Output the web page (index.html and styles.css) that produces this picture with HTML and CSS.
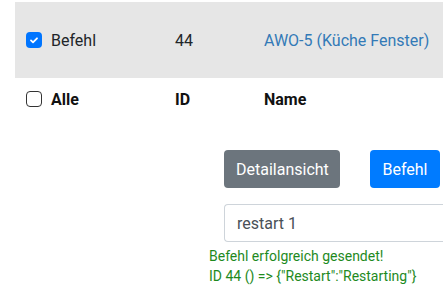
FILE: index.html
```html
<!DOCTYPE html>
<html lang="de">
<head>
  <meta charset="UTF-8" />
  <meta name="viewport" content="width=device-width, initial-scale=1.0" />
  <title>Befehle</title>
  <link rel="stylesheet" href="styles.css">
</head>
<body>
  <div class="row selected">
    <div class="cell first">
      <span class="check checked">
        <svg viewBox="0 0 16 16" width="16" height="16"><path d="M5 8.4l2 1.9 4-4" fill="none" stroke="#fff" stroke-width="1.8" stroke-linecap="round" stroke-linejoin="round"/></svg>
      </span>
      <span>Befehl</span>
    </div>
    <div class="cell">44</div>
    <div class="cell"><a class="name" href="#">AWO-5 (Küche Fenster)</a></div>
  </div>

  <div class="row head">
    <div class="cell first">
      <span class="check"></span>
      <span>Alle</span>
    </div>
    <div class="cell">ID</div>
    <div class="cell">Name</div>
  </div>

  <div class="actions">
    <div class="buttons">
      <button class="btn grey">Detailansicht</button>
      <button class="btn blue">Befehl</button>
    </div>
    <input class="cmd" type="text" value="restart 1" />
  </div>

  <div class="result">
    Befehl erfolgreich gesendet!<br>
    ID 44 () =&gt; {"Restart":"Restarting"}
  </div>
</body>
</html>
```

FILE: styles.css
```css
body {
  font-family: Roboto, "Noto Sans", sans-serif;
  font-size: 16px;
  color: #212529;
  margin: 0;
  padding-top: 2px;
  background: #fff;
  overflow: hidden;
}
.row {
  display: grid;
  grid-template-columns: 149px 89px auto;
  align-items: center;
  margin-left: 15px;
  padding-left: 11px;
  white-space: nowrap;
}
.selected {
  height: 76px;
  background: #e6e6e6;
}
.head {
  height: 42px;
  font-weight: bold;
  color: #111;
}
.first {
  display: flex;
  align-items: center;
  gap: 9px;
}
.check {
  width: 16px;
  height: 16px;
  box-sizing: border-box;
  border: 1.5px solid #333;
  border-radius: 4px;
  display: inline-flex;
}
.check.checked {
  border: none;
  background: #0075ff;
}
.name {
  color: #337ab7;
  text-decoration: none;
}
.actions {
  margin-left: 224px;
  margin-top: 30px;
}
.buttons {
  display: flex;
  gap: 30px;
}
.btn {
  font-family: inherit;
  font-size: 16px;
  height: 38px;
  padding: 0 12px;
  border: none;
  border-radius: 4px;
  color: #fff;
}
.grey {
  background: #6c757d;
  width: 116px;
}
.blue {
  background: #007bff;
  width: 70px;
}
.cmd {
  display: block;
  margin-top: 16px;
  width: 219px;
  height: 38px;
  box-sizing: border-box;
  padding: 0 12px;
  border: 1px solid #ced4da;
  border-right: none;
  border-radius: 4px 0 0 4px;
  font-family: inherit;
  font-size: 16px;
  color: #495057;
}
.result {
  margin-left: 209px;
  margin-top: 4px;
  color: #1e8a1e;
  font-size: 14px;
  line-height: 20px;
}
```
